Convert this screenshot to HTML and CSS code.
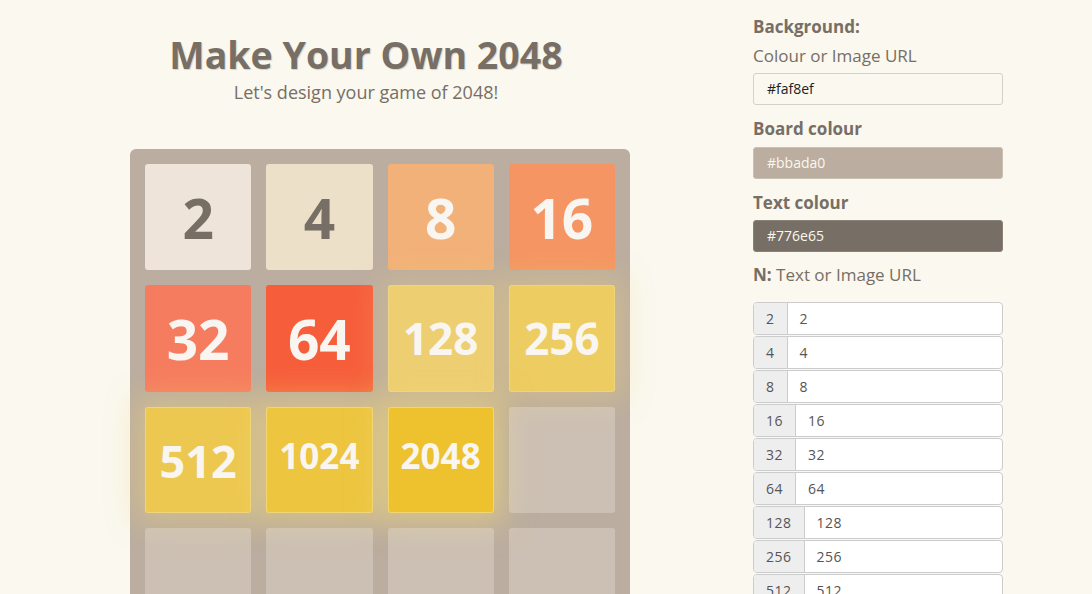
FILE: index.html
```html
<!DOCTYPE html>
<html>
<head>
<meta charset="utf-8">
<link rel="stylesheet" href="styles.css">
</head>
<body>
<div class="page">
  <div class="left">
    <header class="heading">
      <h1 class="title">Make Your Own 2048</h1>
      <p class="subtitle">Let's design your game of 2048!</p>
    </header>
    <div class="board">
      <div class="tile t2">2</div>
      <div class="tile t4">4</div>
      <div class="tile t8">8</div>
      <div class="tile t16">16</div>
      <div class="tile t32">32</div>
      <div class="tile t64">64</div>
      <div class="tile t128">128</div>
      <div class="tile t256">256</div>
      <div class="tile t512">512</div>
      <div class="tile t1024">1024</div>
      <div class="tile t2048">2048</div>
      <div class="tile empty"></div>
      <div class="tile empty"></div>
      <div class="tile empty"></div>
      <div class="tile empty"></div>
      <div class="tile empty"></div>
    </div>
  </div>
  <aside class="panel">
    <div class="group first">
      <div class="label">Background:</div>
      <div class="sublabel">Colour or Image URL</div>
      <div class="field bg-field">#faf8ef</div>
    </div>
    <div class="group">
      <div class="label">Board colour</div>
      <div class="field board-field">#bbada0</div>
    </div>
    <div class="group">
      <div class="label">Text colour</div>
      <div class="field text-field">#776e65</div>
    </div>
    <div class="group">
      <div class="label-n"><b>N:</b> Text or Image URL</div>
    </div>
    <div class="rows">
      <div class="row"><span class="addon">2</span><span class="value">2</span></div>
      <div class="row"><span class="addon">4</span><span class="value">4</span></div>
      <div class="row"><span class="addon">8</span><span class="value">8</span></div>
      <div class="row"><span class="addon">16</span><span class="value">16</span></div>
      <div class="row"><span class="addon">32</span><span class="value">32</span></div>
      <div class="row"><span class="addon">64</span><span class="value">64</span></div>
      <div class="row"><span class="addon">128</span><span class="value">128</span></div>
      <div class="row"><span class="addon">256</span><span class="value">256</span></div>
      <div class="row"><span class="addon">512</span><span class="value">512</span></div>
    </div>
  </aside>
</div>
</body>
</html>
```
FILE: styles.css
```css
html, body {
  margin: 0;
  padding: 0;
  background: #faf8ef;
  height: 594px;
  overflow: hidden;
}
body {
  font-family: "Open Sans", "DejaVu Sans", sans-serif;
  color: #776e65;
}
.page {
  display: flex;
  align-items: flex-start;
}
.left {
  width: 500px;
  margin-left: 130px;
  padding-top: 31px;
}
.heading {
  text-align: center;
  padding-right: 28px;
}
.title {
  margin: 0;
  font-size: 37.5px;
  line-height: 48px;
  font-weight: 700;
  color: #776e65;
  text-shadow: 1px 1px 1px rgba(0,0,0,0.15);
}
.subtitle {
  margin: 1px 0 0;
  font-size: 18px;
  line-height: 24px;
}
.board {
  margin-top: 45px;
  background: #bbada0;
  border-radius: 6px;
  padding: 15px;
  width: 470px;
  height: 470px;
  display: grid;
  grid-template-columns: repeat(4, 1fr);
  grid-template-rows: repeat(4, 1fr);
  gap: 15px;
}
.tile {
  border-radius: 3px;
  display: flex;
  align-items: center;
  justify-content: center;
  font-weight: 700;
  font-size: 55px;
  color: #f9f6f2;
}
.t2 { background: #eee4da; color: #776e65; }
.t4 { background: #ede0c8; color: #776e65; }
.t8 { background: #f2b179; }
.t16 { background: #f59563; }
.t32 { background: #f67c5f; }
.t64 { background: #f65e3b; }
.t128 { background: #edcf72; font-size: 44px; box-shadow: 0 0 30px 10px rgba(243,215,116,0.24), inset 0 0 0 1px rgba(255,255,255,0.14); }
.t256 { background: #edcc61; font-size: 44px; box-shadow: 0 0 30px 10px rgba(243,215,116,0.32), inset 0 0 0 1px rgba(255,255,255,0.19); }
.t512 { background: #edc850; font-size: 45px; padding-top: 2px; box-shadow: 0 0 30px 10px rgba(243,215,116,0.40), inset 0 0 0 1px rgba(255,255,255,0.24); }
.t1024 { background: #edc53f; font-size: 35px; padding-bottom: 8px; box-shadow: 0 0 30px 10px rgba(243,215,116,0.48), inset 0 0 0 1px rgba(255,255,255,0.29); }
.t2048 { background: #edc22e; font-size: 35px; padding-bottom: 8px; box-shadow: 0 0 30px 10px rgba(243,215,116,0.56), inset 0 0 0 1px rgba(255,255,255,0.33); }
.empty { background: rgba(238,228,218,0.35); }

.panel {
  margin-left: 123px;
  width: 250px;
  padding-top: 15px;
}
.group { margin-top: 12px; }
.group.first { margin-top: 0; }
.label {
  font-weight: 700;
  font-size: 17px;
  line-height: 24px;
  margin-bottom: 6px;
}
.first .label { margin-bottom: 5px; }
.sublabel {
  font-size: 17px;
  line-height: 24px;
  margin-bottom: 5px;
}
.label-n {
  font-size: 17px;
  line-height: 24px;
  margin-top: -1px;
}
.label-n b { font-weight: 700; }
.field {
  box-sizing: border-box;
  height: 32px;
  border: 1px solid #d6d1c4;
  border-radius: 3px;
  padding: 0 13px;
  font-size: 14px;
  line-height: 30px;
}
.bg-field { background: #faf8ef; color: #222; }
.board-field { background: #bbada0; color: #faf8ef; border-color: #c9bfb3; }
.text-field { background: #776e65; color: #faf8ef; border-color: #8a8279; margin-top: -1px; }
.rows { margin-top: 15px; }
.row {
  box-sizing: border-box;
  display: flex;
  height: 33px;
  margin-bottom: 1px;
  border: 1px solid #ccc;
  border-radius: 4px;
  background: #fff;
  overflow: hidden;
  font-size: 14px;
  color: #555;
}
.addon {
  background: #eee;
  border-right: 1px solid #ccc;
  padding: 0 12px;
  display: flex;
  align-items: center;
  letter-spacing: 0.5px;
}
.value {
  padding: 0 12px;
  display: flex;
  align-items: center;
  letter-spacing: 0.5px;
}
```
